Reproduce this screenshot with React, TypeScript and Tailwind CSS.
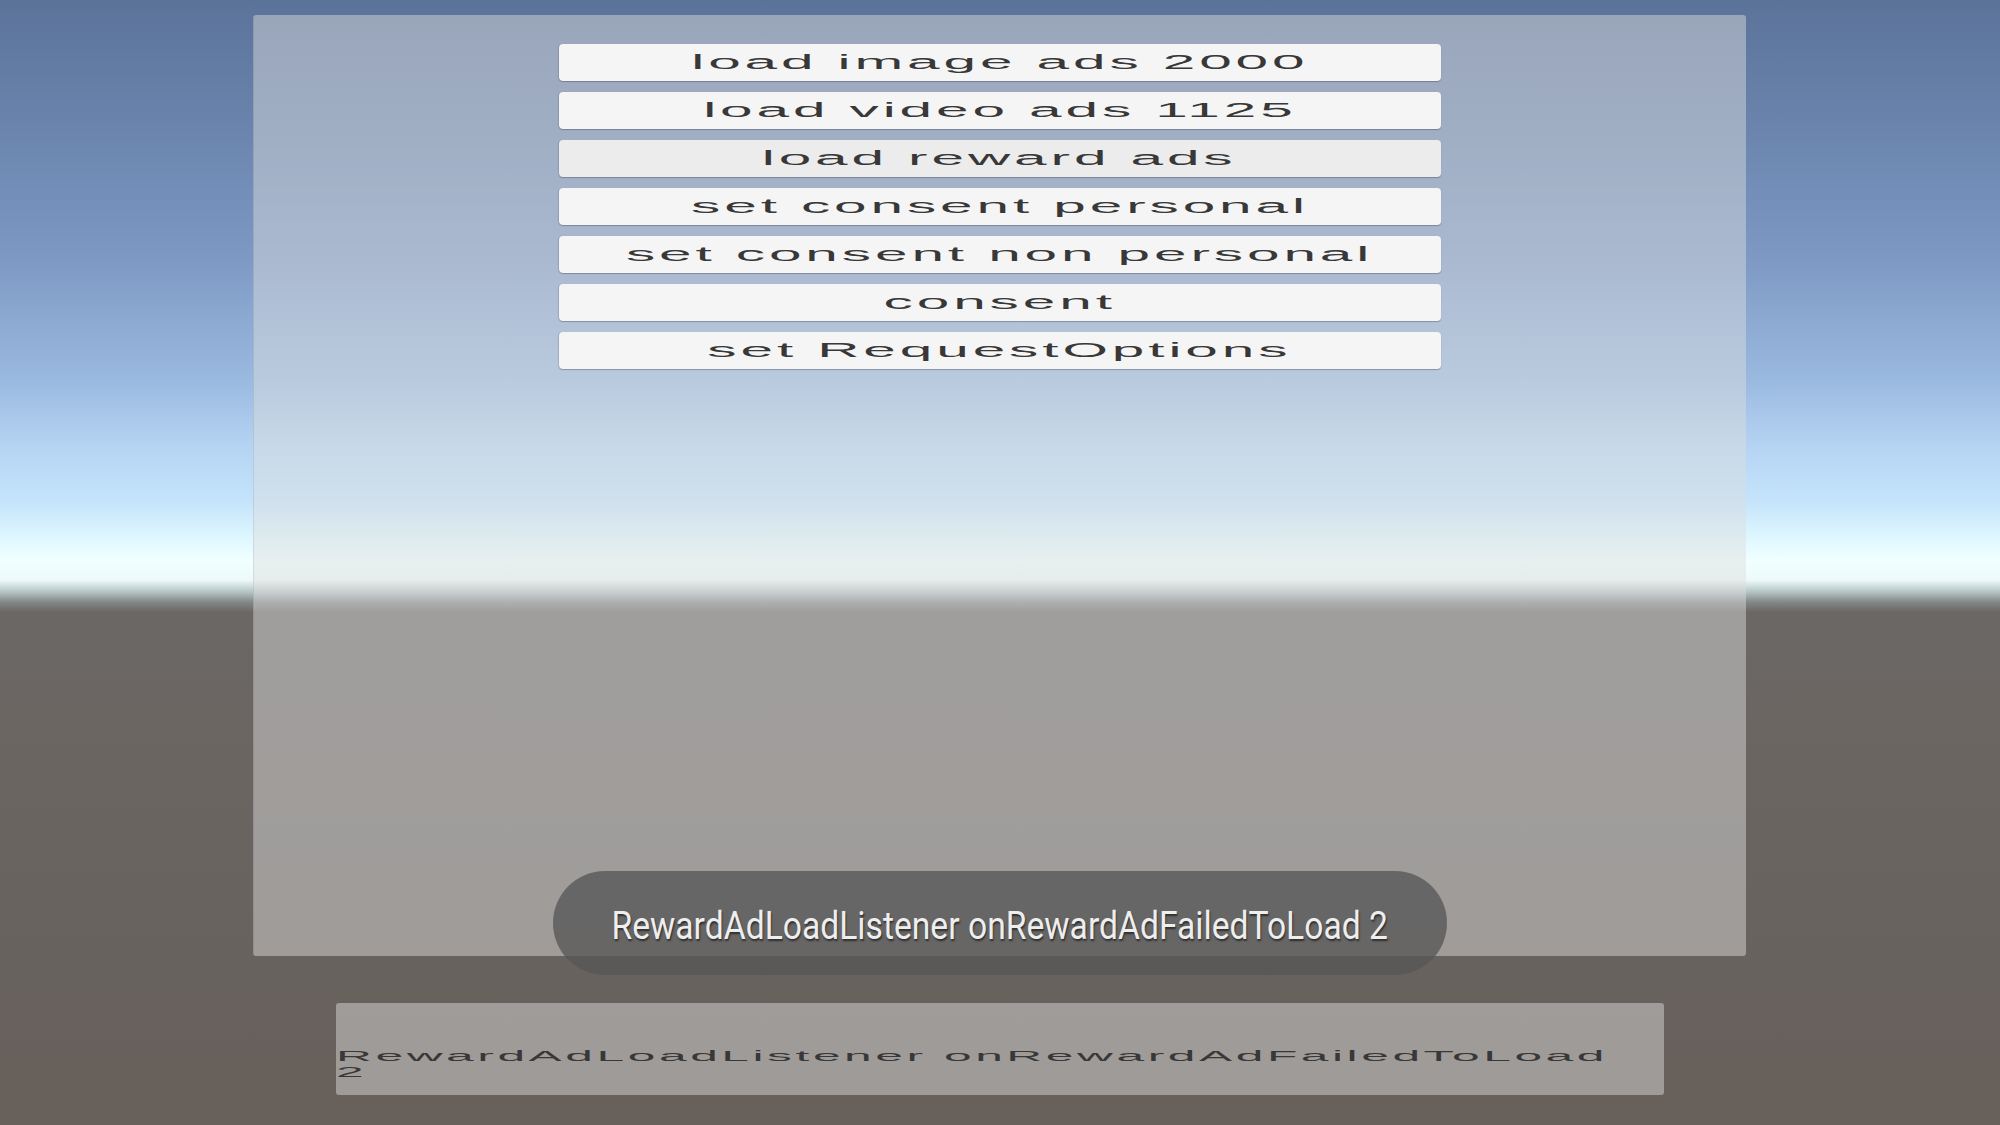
import React from "react";

type AdButton = {
  label: string;
  active?: boolean;
};

const adButtons: AdButton[] = [
  { label: "load image ads 2000" },
  { label: "load video ads 1125" },
  { label: "load reward ads", active: true },
  { label: "set consent personal" },
  { label: "set consent non personal" },
  { label: "consent" },
  { label: "set RequestOptions" },
];

function UnityButton({ label, active }: AdButton) {
  return (
    <button
      className={`flex h-[37px] w-[882px] items-center justify-center rounded-[4px] shadow-[0_1px_1px_rgba(0,0,0,0.25),-1px_0_1px_rgba(0,0,0,0.1)] ${
        active ? "bg-[#ececec]" : "bg-[#f5f5f5]"
      }`}
    >
      <span className="inline-block scale-x-[3] whitespace-nowrap text-[19.5px] tracking-[1.3px] text-[#383838]">
        {label}
      </span>
    </button>
  );
}

export default function App() {
  const message = "RewardAdLoadListener onRewardAdFailedToLoad 2";

  return (
    <div className="relative flex h-[1125px] w-[2000px] flex-col overflow-hidden bg-[linear-gradient(to_bottom,#5b7399_0px,#6a84ad_127px,#7c98c3_255px,#9bbae0_383px,#b5d4f3_446px,#c4e3fb_500px,#dcf6ff_535px,#f0ffff_560px,#eefafa_580px,#b4c4c4_592px,#848888_602px,#6b6764_612px,#67605b_1125px)] pt-[15px] font-['Liberation_Sans',Arial,sans-serif]">
      {/* main canvas panel */}
      <div className="ml-[253px] flex h-[941px] w-[1493px] flex-col items-center gap-[11px] rounded-[3px] bg-[rgba(220,220,220,0.47)] pt-[29px] shadow-[inset_1px_0_0_rgba(0,0,0,0.08)]">
        {adButtons.map((b) => (
          <UnityButton key={b.label} label={b.label} active={b.active} />
        ))}
      </div>

      {/* log text box */}
      <div className="ml-[336px] mt-[47px] h-[92px] w-[1328px] rounded-[3px] bg-[rgba(220,220,220,0.47)] pt-[45px]">
        <div className="origin-left scale-x-[3.23] whitespace-nowrap text-[15.4px] leading-[16px] tracking-[1.1px] text-[#383838]">
          <div>RewardAdLoadListener onRewardAdFailedToLoad</div>
          <div>2</div>
        </div>
      </div>

      {/* android toast */}
      <div className="absolute left-[553px] top-[871px] flex h-[104px] w-[894px] items-center justify-center rounded-full bg-[rgba(86,86,86,0.77)] pt-[5px]">
        <span className="inline-block scale-x-[0.852] whitespace-nowrap font-['Roboto',sans-serif] text-[39.5px] text-[#eeeeee] [text-shadow:1px_2px_2px_rgba(0,0,0,0.55)]">
          {message}
        </span>
      </div>
    </div>
  );
}
